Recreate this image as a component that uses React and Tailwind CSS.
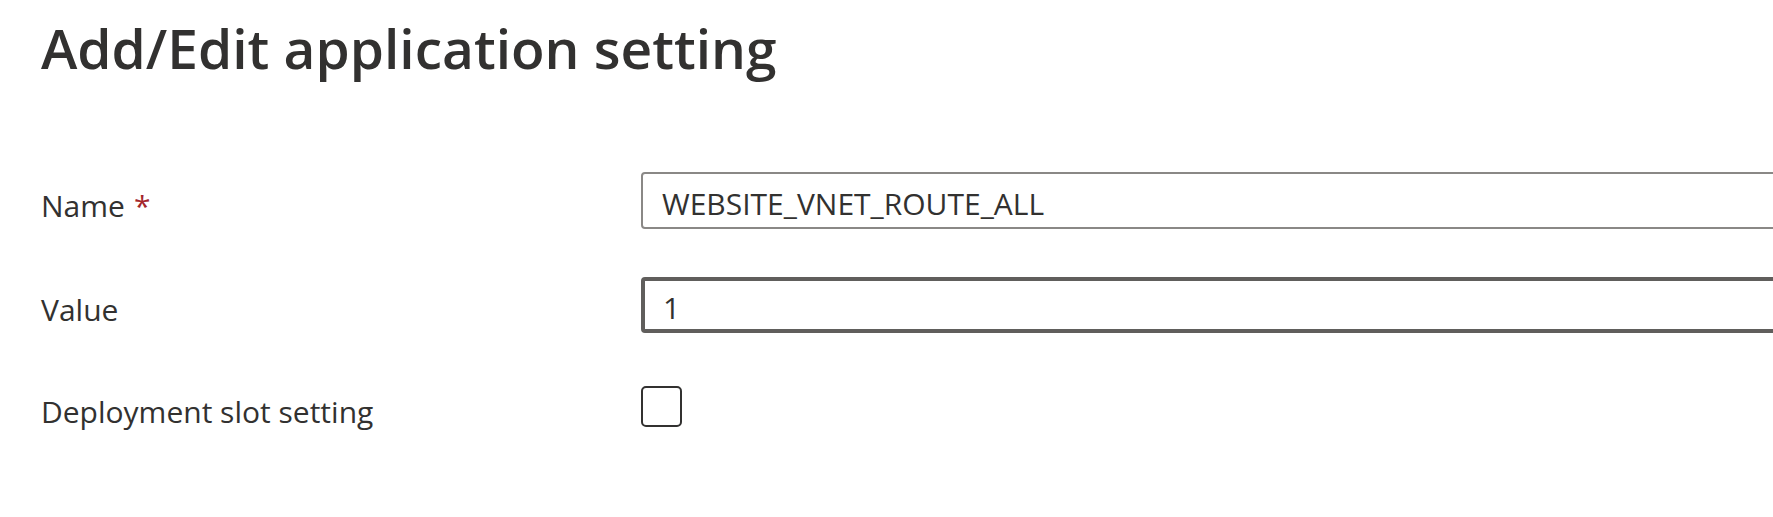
import React from 'react';

const font = { fontFamily: '"Segoe UI", "Open Sans", "Noto Sans", sans-serif' };

const FieldRow = ({ label, required, children }) => (
  <div className="flex items-center h-[57px]">
    <div className="w-[600px] shrink-0 pt-[10px] text-[30px] leading-none text-[#323130]">
      {label}
      {required && <span className="text-[#a4262c] ml-[9px]">*</span>}
    </div>
    <div className="flex-1 flex items-center h-full">{children}</div>
  </div>
);

export default function App() {
  return (
    <div className="w-[1773px] h-[517px] overflow-hidden bg-white pl-[41px]" style={font}>
      <h1 className="text-[55px] font-semibold leading-none text-[#323130] pt-[20px]">
        Add/Edit application setting
      </h1>
      <div className="mt-[97px] flex flex-col">
        <FieldRow label="Name" required>
          <div className="w-[1300px] h-[57px] border-2 border-[#8a8886] rounded-[4px] flex items-center pl-[19px] pt-[6px] text-[30px] leading-none text-[#323130]">
            WEBSITE_VNET_ROUTE_ALL
          </div>
        </FieldRow>
        <div className="mt-[47px]">
          <FieldRow label="Value">
            <div className="w-[1300px] h-[56px] border-[4px] border-[#605e5c] rounded-[4px] flex items-center pl-[18px] pt-[6px] text-[30px] leading-none text-[#323130]">
              1
            </div>
          </FieldRow>
        </div>
        <div className="mt-[45px]">
          <FieldRow label="Deployment slot setting">
            <div className="w-[41px] h-[41px] border-2 border-[#323130] rounded-[5px]" />
          </FieldRow>
        </div>
      </div>
    </div>
  );
}
